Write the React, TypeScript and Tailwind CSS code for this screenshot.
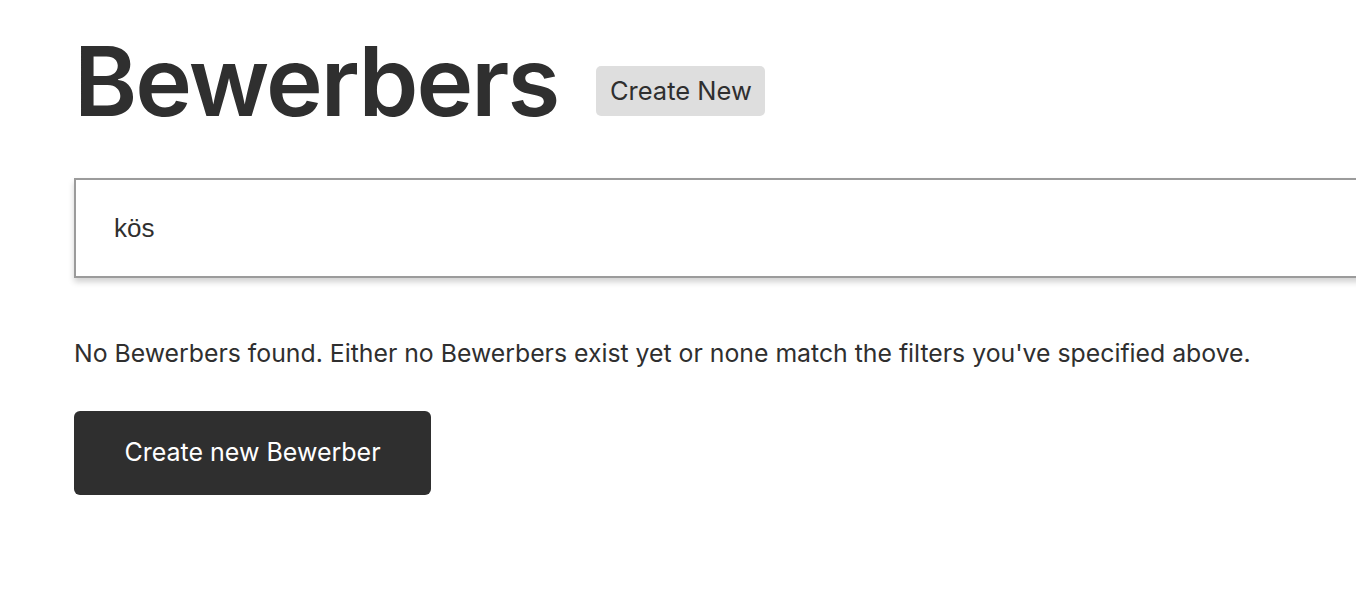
export default function App() {
  return (
    <div className="min-h-screen w-full overflow-hidden bg-white text-[#2f2f2f] font-['Inter',sans-serif]">
      <div className="pl-[74px] pt-[24px]">
        <div className="flex items-center gap-[38px]">
          <h1 className="text-[96px] font-semibold leading-[1.2] tracking-[-0.02em] font-['Inter',sans-serif]">
            Bewerbers
          </h1>
          <button
            type="button"
            className="mt-[19px] h-[50px] w-[169px] rounded-[5px] bg-[#dedede] text-[25.5px] text-[#2f2f2f]"
          >
            Create New
          </button>
        </div>

        <div className="mt-[39px] w-[1320px] border-2 border-[#9b9b9b] bg-white shadow-[0_4px_6px_rgba(0,0,0,0.18)]">
          <input
            type="text"
            defaultValue="kös"
            className="block h-[96px] w-full px-[38px] text-[26px] text-[#2f2f2f] outline-none font-['Liberation_Sans',Arial,sans-serif]"
          />
        </div>

        <p className="mt-[59px] text-[24.8px] leading-[32px]">
          No Bewerbers found. Either no Bewerbers exist yet or none match the filters you've specified above.
        </p>

        <button
          type="button"
          className="mt-[42px] h-[84px] w-[357px] rounded-[6px] bg-[#2f2f2f] text-[25px] text-white"
        >
          Create new Bewerber
        </button>
      </div>
    </div>
  );
}
